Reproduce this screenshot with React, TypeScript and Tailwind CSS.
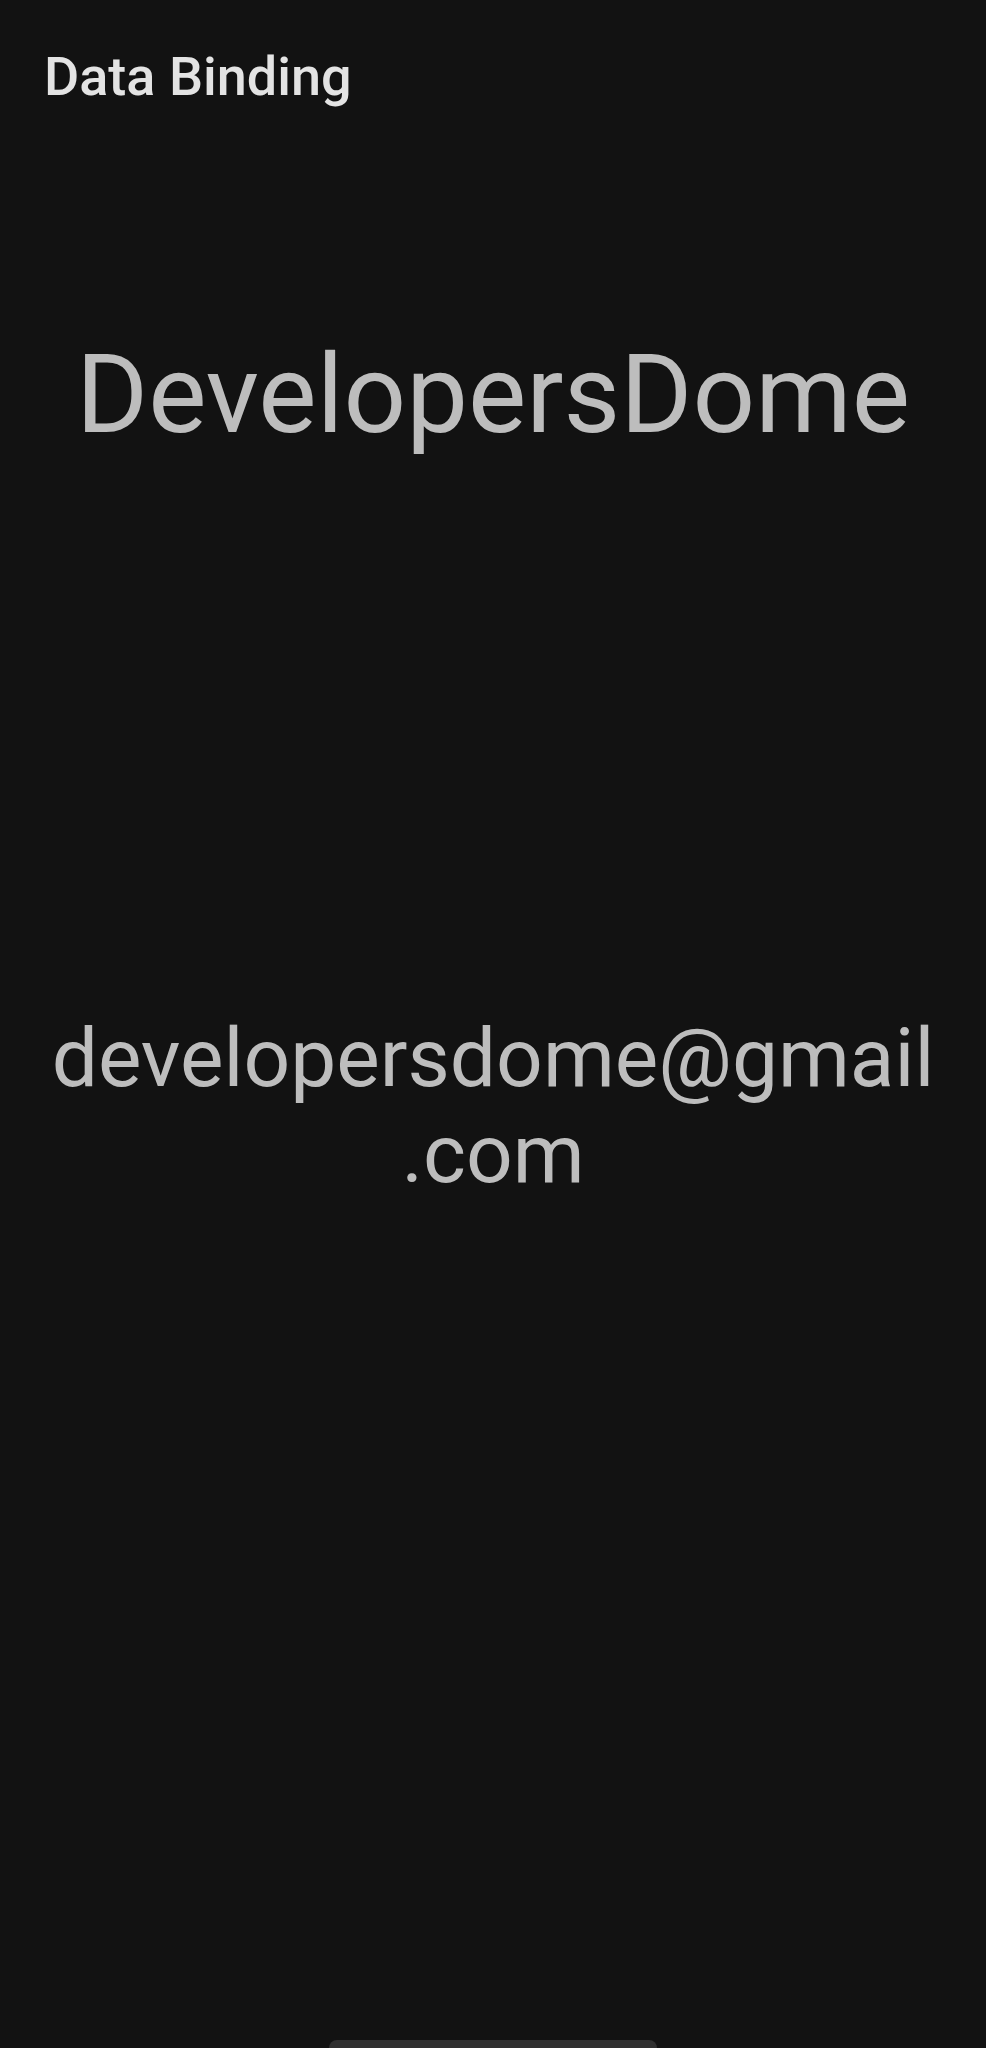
export default function App() {
  return (
    <div
      className="relative flex h-[2048px] w-[986px] flex-col bg-[#121212]"
      style={{ fontFamily: 'Roboto, "Liberation Sans", sans-serif' }}
    >
      {/* app bar */}
      <div className="flex h-[150px] items-start pl-[44px] pt-[44px]">
        <h1 className="text-[54px] font-medium leading-[66px] text-[#e3e3e3]">Data Binding</h1>
      </div>

      <div className="flex flex-col items-center">
        <p className="mt-[180px] text-center text-[110px] leading-[130px] text-[#bdbdbd]">DevelopersDome</p>
        <p className="mt-[550px] text-center text-[82px] leading-[96px] text-[#bdbdbd]">
          developersdome@gmail
          <br />
          .com
        </p>
      </div>

      {/* gesture bar */}
      <div className="absolute bottom-0 left-[329px] h-[8px] w-[328px] rounded-t-full bg-[#2f2f2f]" />
    </div>
  );
}
